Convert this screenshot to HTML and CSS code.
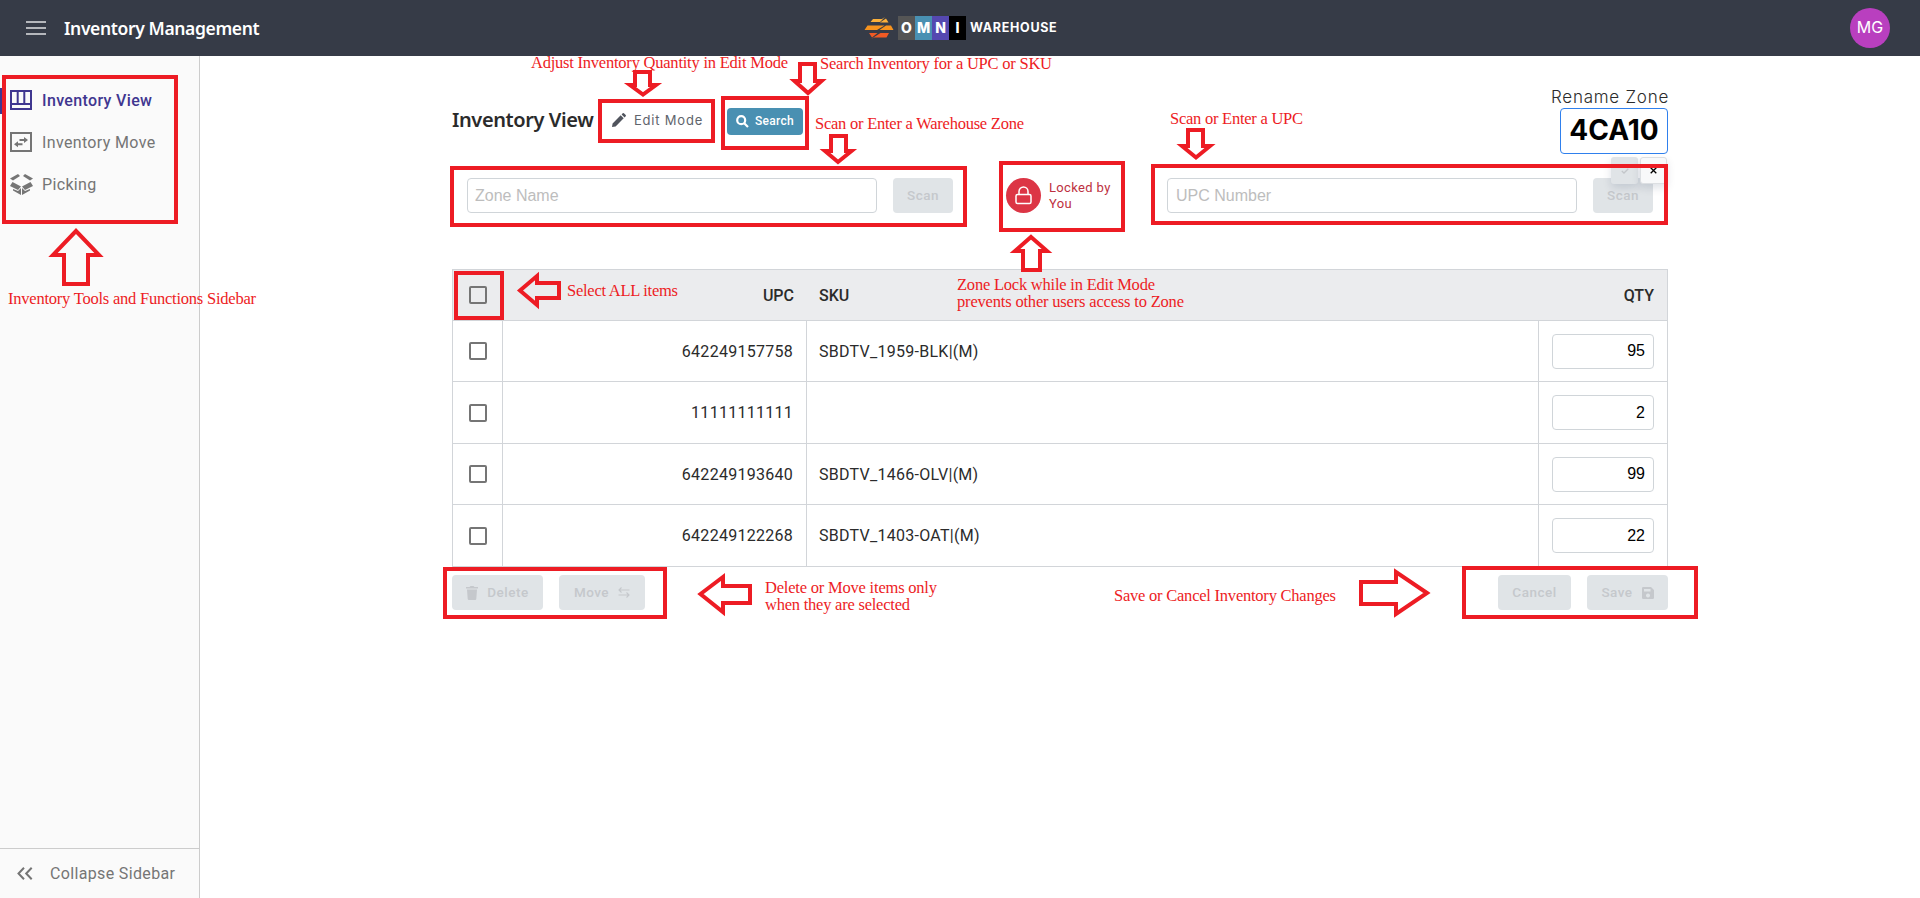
FILE: index.html
```html
<!DOCTYPE html>
<html lang="en">
<head>
    <meta charset="UTF-8">
    <meta name="viewport" content="width=device-width, initial-scale=1.0">
    <title>Inventory Management</title>
    <link rel="stylesheet" href="styles.css">
</head>
<body>
    <header class="topbar">
        <div class="topbar-left">
            <div class="hamburger"><span></span><span></span><span></span></div>
            <div class="topbar-title">Inventory Management</div>
        </div>
        <div class="logo">
            <svg width="30" height="22" viewBox="0 0 30 22">
                <path fill="#fbb03b" d="M9 2h9l3-2-5 5H6.500zM22 1.500l2.500 4H16z"/>
                <path fill="#f7931e" d="M3.500 8.500h17L13 13H.5zM22 8.500h5l2.500 4.500H15.500z"/>
                <path fill="#f15a24" d="M5 16h8.500L8 20.500zM16.500 16h8.500l-2.500 4.500H10l-3 1.500z"/>
            </svg>
            <div class="logo-letters">
                <span class="letter-o">O</span><span class="letter-m">M</span><span class="letter-n">N</span><span class="letter-i">I</span>
            </div>
            <span class="logo-word">WAREHOUSE</span>
        </div>
        <div class="avatar">MG</div>
    </header>

    <div class="layout">
        <nav class="sidebar">
            <ul class="nav-list">
                <li class="nav-item active">
                    <svg width="22" height="20" viewBox="0 0 22 20" fill="none" stroke="currentColor" stroke-width="2">
                        <path d="M1 1h20v18H1zM1 14h20M7.700 1v13M14.300 1v13"/>
                    </svg>
                    <span>Inventory View</span>
                </li>
                <li class="nav-item">
                    <svg width="22" height="20" viewBox="0 0 22 20">
                        <path d="M1 1h20v18H1z" fill="none" stroke="currentColor" stroke-width="2"/>
                        <path fill="currentColor" d="M9.500 7h4.500V5l4 3-4 3V9H9.500zM12.500 11.200H8v-2l-4 3 4 3v-2h4.500z"/>
                    </svg>
                    <span>Inventory Move</span>
                </li>
                <li class="nav-item picking">
                    <svg width="23" height="21" viewBox="0 0 23 21" fill="currentColor">
                        <path d="M0 4.500L8 0l2 2-7 4.500zM23 4.500L15 0l-2 2 7 4.500zM2.500 8l8.500 4.500L8 16l-8-4zM20.500 8L12 12.500l3 3.500 8-4zM3 15l5 2 3-3v7l-8-4.500zM20 15l-5 2-3-3v7l8-4.500z"/>
                    </svg>
                    <span>Picking</span>
                </li>
            </ul>
            <div class="collapse">
                <svg width="16" height="13" viewBox="0 0 16 13" fill="none" stroke="currentColor" stroke-width="2">
                    <path d="M7 .7L1.500 6.500 7 12.300M14.700 .7L9.200 6.500l5.500 5.800"/>
                </svg>
                <span>Collapse Sidebar</span>
            </div>
        </nav>

        <main class="content">
            <div class="page-head">
                <h1>Inventory View</h1>
                <div class="edit-mode">
                    <svg width="14" height="14" viewBox="0 0 14 14" fill="#50545d">
                        <path d="M0 14l.6-3.600L8.700 2.300l3 3-8.100 8.100zM9.600 1.400L10.700.3q.6-.5 1.200 0l1.800 1.800q.5.600 0 1.200l-1.100 1.100z"/>
                    </svg>
                    <span>Edit Mode</span>
                </div>
                <button class="btn btn-search">
                    <svg width="13" height="13" viewBox="0 0 13 13" fill="none" stroke="#fff" stroke-width="2.200">
                        <circle cx="5.200" cy="5.200" r="4"/><path d="M8.200 8.200L12 12"/>
                    </svg>
                    Search
                </button>
                <div class="rename">
                    <label>Rename Zone</label>
                    <div class="rename-box">4CA10</div>
                    <div class="rename-actions">
                        <span class="confirm">
                            <svg width="8" height="6" viewBox="0 0 8 6" fill="none" stroke="#c3c6ca" stroke-width="1.300"><path d="M.8 3l2.200 2L7.300.8"/></svg>
                        </span>
                        <span class="dismiss">
                            <svg width="7" height="7" viewBox="0 0 7 7" stroke="#000" stroke-width="1.300"><path d="M.7.7l5.600 5.600M6.300.7L.7 6.300"/></svg>
                        </span>
                    </div>
                </div>
            </div>

            <div class="scan-row">
                <div class="scan-group">
                    <input type="text" class="field" placeholder="Zone Name">
                    <button class="btn" disabled>Scan</button>
                </div>
                <div class="lock">
                    <div class="lock-icon">
                        <svg width="17" height="19" viewBox="0 0 17 19" fill="none" stroke="#fff" stroke-width="1.500">
                            <rect x="1" y="8.500" width="15" height="9" rx="1.500"/><path d="M4 8.500V5.500a4.500 4.500 0 0 1 9 0v3"/>
                        </svg>
                    </div>
                    <div class="lock-text">Locked by<br>You</div>
                </div>
                <div class="scan-group">
                    <input type="text" class="field field-upc" placeholder="UPC Number">
                    <button class="btn" disabled>Scan</button>
                </div>
            </div>

            <table class="inventory">
                <thead>
                    <tr><th class="col-check"><i class="check"></i></th><th class="col-upc">UPC</th><th class="col-sku">SKU</th><th class="col-qty">QTY</th></tr>
                </thead>
                <tbody>
                    <tr class="short">
                        <td class="col-check"><i class="check"></i></td><td class="col-upc">642249157758</td><td class="col-sku">SBDTV_1959-BLK|(M)</td>
                        <td class="col-qty"><input class="qty" type="text" value="95"></td>
                    </tr>
                    <tr>
                        <td class="col-check"><i class="check"></i></td><td class="col-upc">11111111111</td><td class="col-sku"></td>
                        <td class="col-qty"><input class="qty" type="text" value="2"></td>
                    </tr>
                    <tr class="short">
                        <td class="col-check"><i class="check"></i></td><td class="col-upc">642249193640</td><td class="col-sku">SBDTV_1466-OLV|(M)</td>
                        <td class="col-qty"><input class="qty" type="text" value="99"></td>
                    </tr>
                    <tr>
                        <td class="col-check"><i class="check"></i></td><td class="col-upc">642249122268</td><td class="col-sku">SBDTV_1403-OAT|(M)</td>
                        <td class="col-qty"><input class="qty" type="text" value="22"></td>
                    </tr>
                </tbody>
            </table>

            <div class="actions">
                <button class="btn btn-delete" disabled>
                    <svg width="12" height="14" viewBox="0 0 12 14" fill="currentColor"><path d="M0 1h3.500l1-1h3l1 1H12v1.500H0zM1 3.500h10L10.300 13q-.1 1-1.100 1H2.800q-1 0-1.100-1z"/></svg>
                    Delete
                </button>
                <button class="btn btn-move" disabled>
                    Move
                    <svg width="12" height="11" viewBox="0 0 12 11" fill="none" stroke="currentColor" stroke-width="1.100"><path d="M11.500 3H1M3.500 .5L1 3l2.500 2.500M.5 8H11M8.500 5.500L11 8l-2.500 2.500"/></svg>
                </button>
                <button class="btn btn-cancel" disabled>Cancel</button>
                <button class="btn btn-save" disabled>
                    Save
                    <svg width="12" height="12" viewBox="0 0 12 12" fill="currentColor" fill-rule="evenodd"><path d="M1.300 0H9l3 3v7.700q0 1.300-1.300 1.300H1.300Q0 12 0 10.700V1.300Q0 0 1.300 0zM2 2v2.500h6.500V2zM6 6.500a2 2 0 1 0 .01 0z"/></svg>
                </button>
            </div>
        </main>
    </div>

    <!-- callouts drawn over the app -->
    <svg class="callouts" width="1920" height="898" viewBox="0 0 1920 898">
        <g class="marks">
            <rect x="4" y="77" width="172" height="145"/>
            <rect x="600" y="101" width="113" height="40"/>
            <rect x="723" y="98" width="84" height="50"/>
            <rect x="452" y="168" width="513" height="57"/>
            <rect x="1001" y="163" width="122" height="67"/>
            <rect x="1153" y="166" width="513" height="57"/>
            <rect x="456" y="273" width="46" height="45"/>
            <rect x="445" y="569" width="220" height="48"/>
            <rect x="1464" y="568" width="232" height="49"/>

            <path d="M76 231L99 255H88V284H64V255H53Z"/>
            <path d="M635 72H650V85H656L643 94.500 630 85H635Z"/>
            <path d="M800 64H815V81H821.500L808 93 794.500 81H800Z"/>
            <path d="M831 136H846V151H851.500L838 162 825 151H831Z"/>
            <path d="M1188 130H1203V146H1210L1196 157.500 1182 146H1188Z"/>
            <path d="M1031 237L1047 251H1040V270H1023V251H1015Z"/>
            <path d="M520 290.500L537 276V283H559V298H537V305Z"/>
            <path d="M700.500 594L723 577V586H750V603H723V612Z"/>
            <path d="M1427 593L1396 572V582H1361V604H1396V614Z"/>
        </g>
        <g class="notes">
            <text x="8" y="304" textLength="248">Inventory Tools and Functions Sidebar</text>
            <text x="531" y="68" textLength="257">Adjust Inventory Quantity in Edit Mode</text>
            <text x="820" y="69" textLength="232">Search Inventory for a UPC or SKU</text>
            <text x="815" y="129" textLength="209">Scan or Enter a Warehouse Zone</text>
            <text x="1170" y="124" textLength="133">Scan or Enter a UPC</text>
            <text x="957" y="290" textLength="198">Zone Lock while in Edit Mode</text>
            <text x="957" y="307" textLength="227">prevents other users access to Zone</text>
            <text x="567" y="296" textLength="111">Select ALL items</text>
            <text x="765" y="593" textLength="172">Delete or Move items only</text>
            <text x="765" y="610" textLength="145">when they are selected</text>
            <text x="1114" y="601" textLength="222">Save or Cancel Inventory Changes</text>
        </g>
    </svg>
</body>
</html>
```

FILE: styles.css
```css
* {
    box-sizing: border-box;
}
body {
    margin: 0;
    height: 898px;
    overflow: hidden;
    position: relative;
    background-color: #fff;
    color: #2b2b2b;
    font-family: Roboto, sans-serif;
    font-size: 16px;
}
svg {
    display: block;
    flex: none;
}
.topbar {
    height: 56px;
    background-color: #363b47;
    color: #fff;
    display: grid;
    grid-template-columns: 864px 1fr 40px;
    align-items: center;
    padding-right: 30px;
}
.topbar-left {
    display: flex;
    align-items: center;
    padding-left: 26px;
    gap: 18px;
}
.hamburger {
    width: 20px;
    display: flex;
    flex-direction: column;
    gap: 4px;
}
.hamburger span {
    height: 2px;
    background-color: #b5b7bc;
}
.topbar-title {
    font: 600 17.5px/24px "Noto Sans", sans-serif;
    letter-spacing: -0.37px;
    white-space: nowrap;
}
.logo {
    display: flex;
    align-items: center;
    gap: 4px;
}
.logo-letters {
    display: flex;
    font: 800 14px/24px Inter, sans-serif;
}
.logo-letters span {
    width: 17px;
    height: 24px;
    text-align: center;
}
.letter-o { background-color: #555; }
.letter-m { background-color: #4990b2; }
.letter-n { background-color: #5548b0; }
.letter-i { background-color: #000; }
.logo-word {
    font: 700 12.5px/24px Inter, sans-serif;
    letter-spacing: 0.7px;
}
.avatar {
    width: 40px;
    height: 40px;
    border-radius: 50%;
    background-color: #b93fbf;
    text-align: center;
    font: 400 16px/39px Inter, sans-serif;
}
.layout {
    display: flex;
    height: 842px;
}
.sidebar {
    width: 200px;
    background-color: #fafafa;
    border-right: 1px solid #ccc;
    color: #757575;
    display: flex;
    flex-direction: column;
    justify-content: space-between;
    font-size: 16px;
    letter-spacing: 0.35px;
}
.nav-list {
    list-style: none;
    margin: 0;
    padding: 32px 0 0;
    display: flex;
    flex-direction: column;
    gap: 16px;
}
.nav-item {
    height: 26px;
    display: flex;
    align-items: center;
    gap: 10px;
    padding: 0 0 2px 10px;
}
.nav-item.active {
    color: #3f3690;
    border-left: 2px solid #3f3690;
    padding-left: 8px;
    font-weight: 500;
}
.nav-item.picking {
    gap: 9px;
}
.collapse {
    height: 50px;
    border-top: 1px solid #ccc;
    display: flex;
    align-items: center;
    gap: 17px;
    padding-left: 17px;
}
.content {
    width: 1216px;
    margin-left: 252px;
}
.page-head {
    height: 122px;
    display: flex;
    align-items: flex-start;
    position: relative;
}
.page-head h1 {
    margin: 50px 0 0;
    width: 160px;
    font: 600 20px/28px "Noto Sans", sans-serif;
    letter-spacing: -0.4px;
    white-space: nowrap;
}
.edit-mode {
    width: 115px;
    margin-top: 54px;
    display: flex;
    align-items: center;
    gap: 8px;
    color: #60646c;
    font: 400 13px/20px Inter, sans-serif;
    letter-spacing: 0.8px;
    white-space: nowrap;
}
.btn {
    height: 35px;
    padding: 0 14px;
    border: none;
    border-radius: 4px;
    background-color: #e0e4e7;
    color: #c5c8cc;
    font: 500 13.5px/35px Roboto, sans-serif;
    letter-spacing: 0.5px;
    display: flex;
    align-items: center;
    justify-content: center;
    gap: 9px;
    white-space: nowrap;
}
.btn-search {
    margin-top: 52px;
    width: 76px;
    height: 27px;
    padding: 0;
    gap: 6px;
    background-color: #4990b2;
    color: #fff;
    font-size: 12px;
    letter-spacing: 0.3px;
}
.rename {
    margin-left: auto;
    margin-top: 30px;
    display: flex;
    flex-direction: column;
    align-items: flex-end;
    position: relative;
}
.rename label {
    font: 300 17px/22px Inter, sans-serif;
    letter-spacing: 0.75px;
    margin-right: -1px;
}
.rename-box {
    width: 108px;
    height: 46px;
    border: 1px solid #2f80ed;
    border-radius: 4px;
    color: #000;
    text-align: center;
    font: 700 28px/43px Inter, sans-serif;
}
/* floating confirm / dismiss pair, overlaps the scan row */
.rename-actions {
    position: absolute;
    top: 71px;
    right: 1px;
    display: flex;
    gap: 2px;
}
.rename-actions span {
    width: 27px;
    height: 27px;
    border-radius: 3px;
    display: flex;
    align-items: center;
    justify-content: center;
    box-shadow: 0 4px 8px rgba(9, 30, 66, 0.13);
}
.confirm {
    background-color: #e0e4e7;
}
.dismiss {
    background-color: #f8f9fa;
    border: 1px solid #dcdfe2;
}
.scan-row {
    display: flex;
    align-items: center;
    height: 35px;
    padding: 0 15px;
}
.scan-group {
    display: flex;
    gap: 16px;
}
.scan-group .btn {
    width: 60px;
}
.field {
    width: 410px;
    height: 35px;
    border: 1px solid #d0d5d9;
    border-radius: 4px;
    padding: 0 7px;
    font: 16px "Liberation Sans", sans-serif;
}
.field-upc {
    padding-left: 8px;
}
.field::placeholder {
    color: #bdbdbd;
}
.lock {
    width: 214px;
    padding-left: 53px;
    display: flex;
    align-items: center;
    gap: 8px;
}
.lock-icon {
    width: 35px;
    height: 35px;
    border-radius: 50%;
    background-color: #dc3545;
    display: flex;
    align-items: center;
    justify-content: center;
}
.lock-text {
    color: #bd3040;
    font-size: 13px;
    line-height: 16px;
    letter-spacing: 0.35px;
    white-space: nowrap;
}
.inventory {
    margin-top: 56px;
    width: 1216px;
    table-layout: fixed;
    border-collapse: separate;
    border-spacing: 0;
    border: 1px solid #d2d5d9;
    border-bottom: none;
    letter-spacing: 0.27px;
}
.inventory th,
.inventory td {
    padding: 0 13px 0 12px;
    border-bottom: 1px solid #d2d5d9;
}
.inventory td {
    height: 62px;
    border-right: 1px solid #d2d5d9;
}
.inventory .short td {
    height: 61px;
}
.inventory td:last-child {
    border-right: none;
}
.inventory th {
    height: 51px;
    background-color: #ebecee;
    font-weight: 500;
    letter-spacing: 0;
}
.inventory .col-check {
    width: 50px;
    padding: 0 0 0 16px;
}
.col-upc {
    width: 304px;
    text-align: right;
}
.col-sku {
    text-align: left;
}
.col-qty {
    width: 128px;
    text-align: right;
}
.inventory td.col-qty {
    padding: 0 13px;
}
.check {
    display: block;
    width: 18px;
    height: 18px;
    border: 2px solid #757575;
    border-radius: 2px;
}
.qty {
    display: block;
    width: 102px;
    height: 35px;
    border: 1px solid #d0d5d9;
    border-radius: 4px;
    padding: 0 8px;
    text-align: right;
    font: 16px "Liberation Sans", sans-serif;
}
.actions {
    display: flex;
    gap: 16px;
    margin-top: 8px;
}
.btn-delete {
    width: 91px;
}
.btn-move {
    width: 86px;
}
.btn-cancel {
    width: 73px;
    margin-left: auto;
}
.btn-save {
    width: 81px;
}
.callouts {
    position: absolute;
    top: 0;
    left: 0;
    pointer-events: none;
}
.marks {
    fill: none;
    stroke: #ed1c24;
    stroke-width: 4;
    stroke-miterlimit: 10;
}
.notes {
    fill: #ed1c24;
    font: 16.5px "Liberation Serif", serif;
}
```
